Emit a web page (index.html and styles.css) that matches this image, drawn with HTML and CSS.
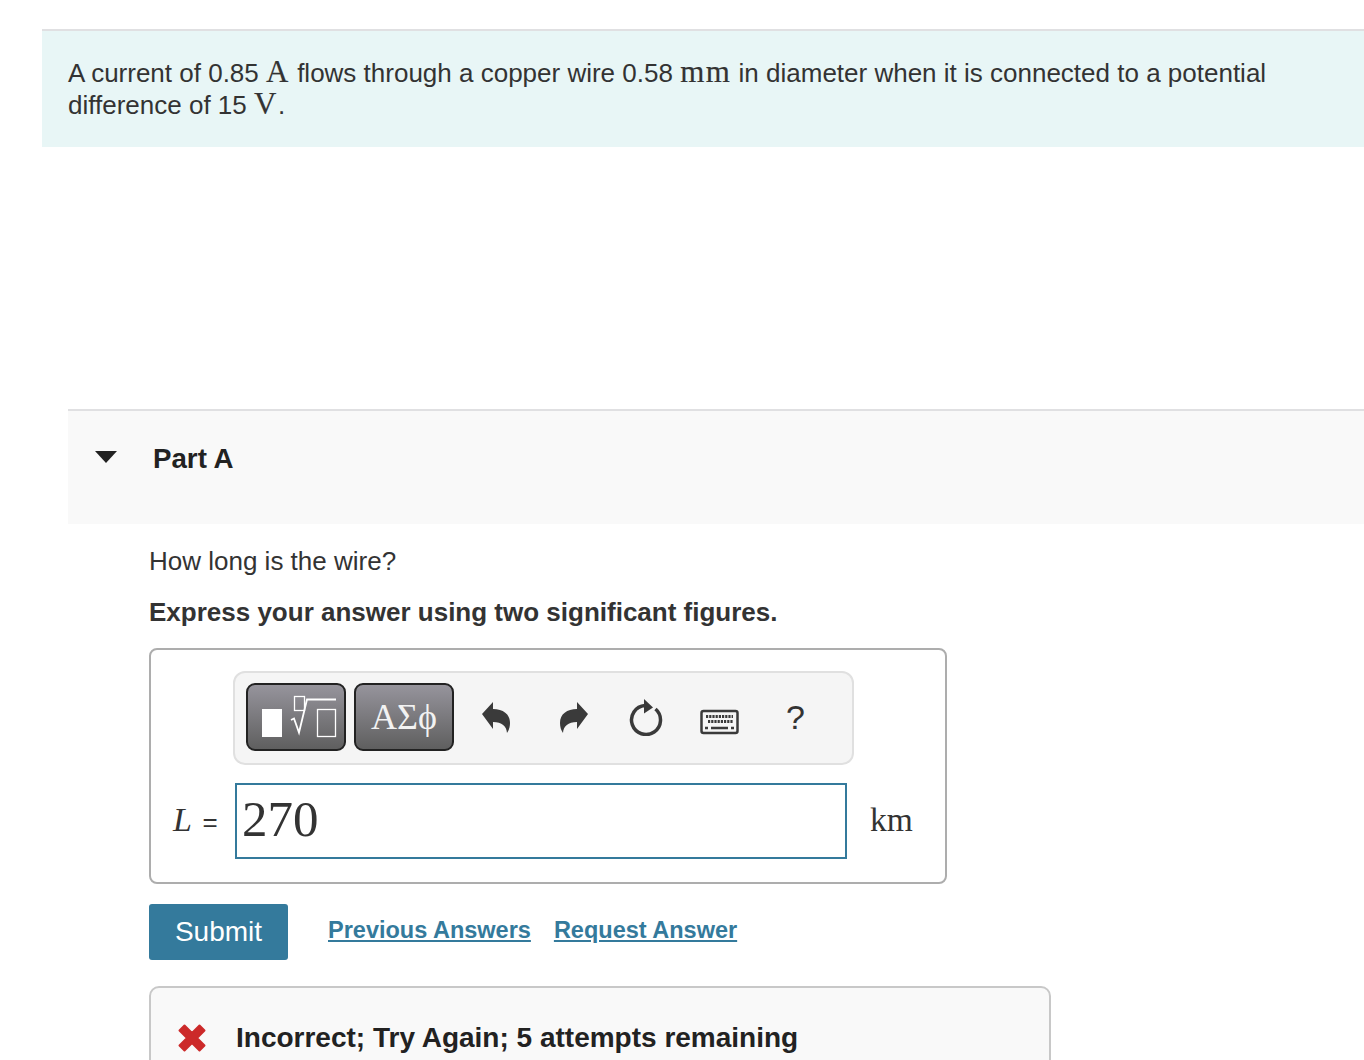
FILE: index.html
```html
<!DOCTYPE html>
<html lang="en">
  <head>
    <meta charset="utf-8">
    <title>Part A</title>
    <link rel="stylesheet" href="styles.css">
  </head>

  <body>
    <div class="intro">
      <p>A current of 0.85 <span class="unit">A</span> flows through a copper wire 0.58 <span class="unit">mm</span> in diameter when it is connected to a potential difference of 15 <span class="unit">V</span>.</p>
    </div>

    <div class="part">
      <div class="partHead">
        <span class="caret"></span>
        <h2>Part A</h2>
      </div>
      <div class="partBody">
        <p class="question">How long is the wire?</p>
        <p class="express">Express your answer using two significant figures.</p>

        <div class="answerBox">
          <div class="toolbar">
            <button class="tplBtn">
              <svg width="96" height="64" viewBox="0 0 96 64">
                <rect x="14" y="24" width="20" height="28" fill="#fff"/>
                <rect x="46.500" y="11.500" width="10" height="14" fill="none" stroke="#fff" stroke-width="1.300"/>
                <path d="M43 35l3-1.500 5 14 8-33h29" fill="none" stroke="#fff" stroke-width="1.800"/>
                <rect x="69.500" y="24.500" width="18" height="27" fill="none" stroke="#fff" stroke-width="1.300"/>
              </svg>
            </button>
            <button class="tplBtn greek">ΑΣϕ</button>
            <svg class="tool undo" width="30" height="34" viewBox="0 0 30 34">
              <path d="M1 14L12 2v7c10 0 17 5 17 14 0 4-1 7-3 10-.5-7-5-11-14-11v7z" fill="#3a3a3a"/>
            </svg>
            <svg class="tool redo" width="30" height="34" viewBox="0 0 30 34">
              <path d="M29 14L18 2v7C8 9 1 14 1 23c0 4 1 7 3 10 .5-7 5-11 14-11v7z" fill="#3a3a3a"/>
            </svg>
            <svg class="tool reset" width="36" height="38" viewBox="0 0 36 38">
              <path d="M17 7.500A14.500 14.500 0 1 0 27.500 11" fill="none" stroke="#3a3a3a" stroke-width="3.500"/>
              <path d="M16 1l9 8.500-9 6z" fill="#3a3a3a"/>
            </svg>
            <svg class="tool keys" width="40" height="26" viewBox="0 0 40 26">
              <rect x="1.500" y="2" width="36" height="22" rx="2" fill="none" stroke="#3a3a3a" stroke-width="2.500"/>
              <path d="M6 7.500h27M8 12.500h25" stroke="#3a3a3a" stroke-width="3" stroke-dasharray="2.200 1" fill="none"/>
              <path d="M5 19h3M11 19h17M31 19h3" stroke="#3a3a3a" stroke-width="2.500" fill="none"/>
            </svg>
            <span class="help">?</span>
          </div>

          <div class="answerRow">
            <span class="label"><i>L</i> <span class="eq">=</span></span>
            <div class="field">270</div>
            <span class="units">km</span>
          </div>
        </div>

        <div class="actions">
          <button class="submit">Submit</button>
          <a href="#" class="link">Previous Answers</a>
          <a href="#" class="link">Request Answer</a>
        </div>

        <div class="feedback">
          <svg width="28" height="28" viewBox="0 0 28 28">
            <path d="M1.500 6.500l5-5L14 9l7.500-7.500 5 5L19 14l7.500 7.500-5 5L14 19l-7.500 7.500-5-5L9 14z" fill="#cc2a2a" stroke="#cc2a2a" stroke-width="2" stroke-linejoin="round"/>
          </svg>
          <span>Incorrect; Try Again; 5 attempts remaining</span>
        </div>
      </div>
    </div>
  </body>
</html>
```

FILE: styles.css
```css
html,
body {
  height: 1060px;
  overflow: hidden;
}

body {
  margin: 0;
  padding-top: 29px;
  box-sizing: border-box;
  background-color: white;
  color: #333;
  font-family: "Liberation Sans", Arial, sans-serif;
}

p {
  margin: 0;
}

.intro {
  height: 90px;
  margin-left: 42px;
  padding: 26px 60px 0 26px;
  border-top: 2px solid #e0e0e2;
  background-color: #e8f6f6;
  font-size: 26px;
  line-height: 32px;
}

.unit {
  font-family: "Liberation Serif", serif;
  font-size: 31px;
  line-height: 20px;
  letter-spacing: 1.500px;
  -webkit-text-stroke: 0.2px #333;
}

.part {
  margin-top: 262px;
  margin-left: 68px;
}

.partHead {
  display: flex;
  align-items: flex-start;
  height: 113px;
  border-top: 2px solid #e0e0e2;
  background-color: #f9f9f9;
}

.caret {
  width: 0;
  height: 0;
  margin: 40px 0 0 27px;
  border-left: 11px solid transparent;
  border-right: 11px solid transparent;
  border-top: 12px solid #222;
}

.partHead h2 {
  margin: 31px 0 0 36px;
  font-size: 27.700px;
  line-height: 34px;
  color: #222;
}

.partBody {
  padding-left: 81px;
}

.question {
  margin-top: 21px;
  font-size: 26px;
  line-height: 32px;
}

.express {
  margin-top: 19px;
  font-size: 26px;
  line-height: 32px;
  font-weight: bold;
}

.answerBox {
  width: 794px;
  height: 232px;
  margin-top: 20px;
  border: 2px solid #adadad;
  border-radius: 8px;
}

.toolbar {
  display: flex;
  align-items: center;
  width: 606px;
  height: 88px;
  margin: 21px 0 0 82px;
  padding: 0 0 2px 11px;
  border: 2px solid #e0e0e0;
  border-radius: 12px;
  background-color: #f5f5f5;
}

.tplBtn {
  width: 100px;
  height: 68px;
  margin-right: 8px;
  padding: 0;
  border: 2px solid #222;
  border-radius: 9px;
  background: linear-gradient(#96949c, #5f5f5f);
  color: #f2f2f2;
}

.tplBtn svg {
  display: block;
}

.greek {
  font-family: "Liberation Serif", serif;
  font-size: 36px;
}

.tool {
  flex: none;
}

.undo {
  margin-left: 19px;
}

.redo {
  margin-left: 48px;
}

.reset {
  margin-left: 39px;
}

.keys {
  margin: 10px 0 0 36px;
}

.help {
  margin-left: 46px;
  font-size: 34px;
  color: #333;
}

.answerRow {
  display: flex;
  align-items: center;
  margin-top: 18px;
}

.label {
  width: 84px;
  margin-bottom: 2px;
  padding-left: 22px;
  box-sizing: border-box;
  font-family: "Liberation Serif", serif;
  font-size: 34px;
  white-space: nowrap;
}

.eq {
  margin-left: 2px;
  font-family: "Liberation Sans", sans-serif;
  font-size: 26px;
}

.field {
  width: 603px;
  height: 72px;
  padding-left: 5px;
  border: 2px solid #347a9c;
  font-family: "Liberation Serif", serif;
  font-size: 51px;
  line-height: 68px;
}

.units {
  margin: 0 0 2px 23px;
  font-family: "Liberation Serif", serif;
  font-size: 33.500px;
}

.actions {
  display: flex;
  align-items: center;
  margin-top: 20px;
}

.submit {
  width: 139px;
  height: 56px;
  margin-right: 40px;
  padding: 0;
  border: none;
  border-radius: 3px;
  background-color: #347a9c;
  color: white;
  font-family: "Liberation Sans", sans-serif;
  font-size: 28px;
}

.link {
  margin-right: 23px;
  margin-top: -4px;
  color: #347a9c;
  font-size: 23.500px;
  font-weight: bold;
}

.feedback {
  display: flex;
  align-items: center;
  gap: 30px;
  width: 871px;
  height: 100px;
  margin-top: 26px;
  padding: 0 0 0 27px;
  border: 2px solid #c8c8c8;
  border-radius: 10px;
  background-color: #f9f9f9;
  color: #222;
  font-size: 28px;
  font-weight: bold;
}
```
